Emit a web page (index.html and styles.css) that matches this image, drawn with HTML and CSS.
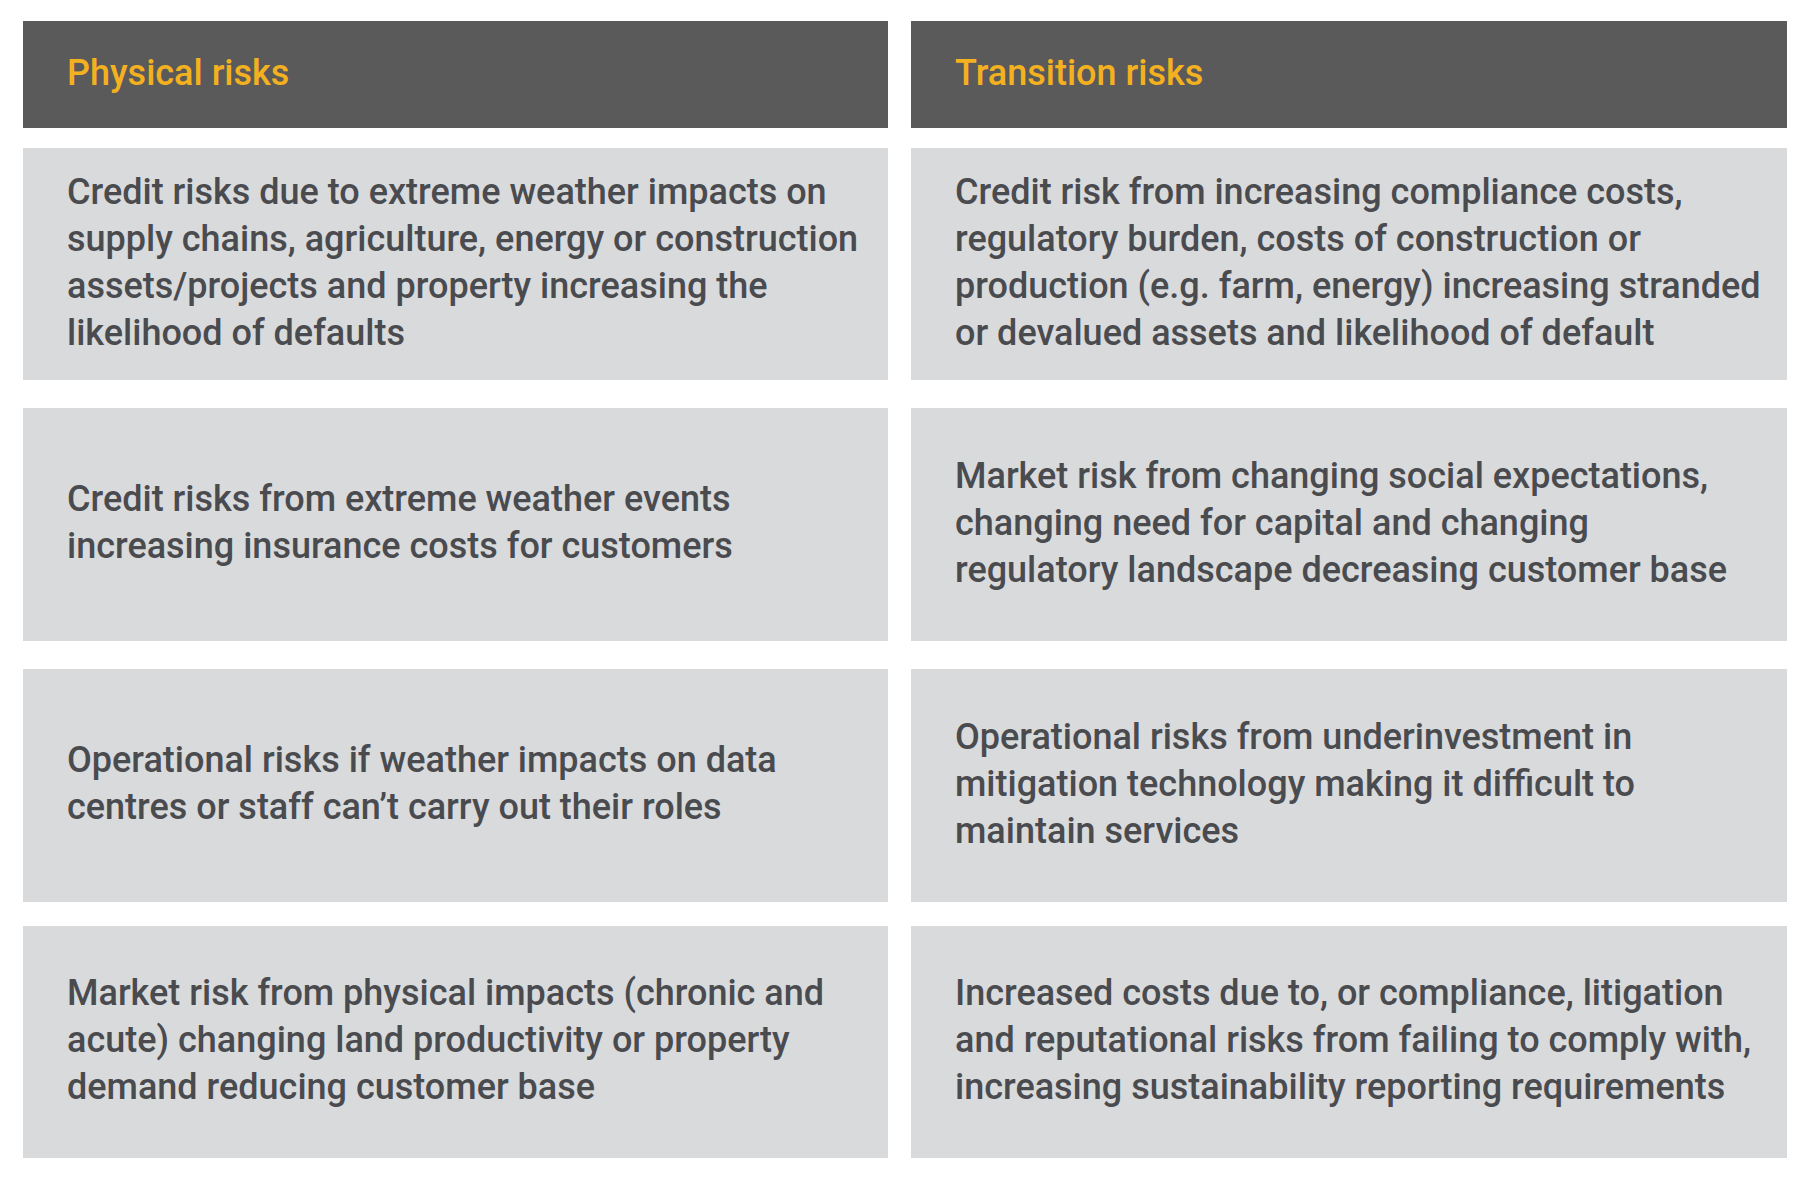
FILE: index.html
```html
<!DOCTYPE html>
<html lang="en">
<head>
<meta charset="utf-8">
<title>Physical and transition risks</title>
<link rel="stylesheet" href="styles.css">
</head>
<body>
<div class="table">
  <div class="head">Physical risks</div>
  <div class="head">Transition risks</div>

  <div class="cell r1">Credit risks due to extreme weather impacts on<br>supply chains, agriculture, energy or construction<br>assets/projects and property increasing the<br>likelihood of defaults</div>
  <div class="cell r1">Credit risk from increasing compliance costs,<br>regulatory burden, costs of construction or<br>production (e.g. farm, energy) increasing stranded<br>or devalued assets and likelihood of default</div>

  <div class="cell r2">Credit risks from extreme weather events<br>increasing insurance costs for customers</div>
  <div class="cell r2">Market risk from changing social expectations,<br>changing need for capital and changing<br>regulatory landscape decreasing customer base</div>

  <div class="cell r3">Operational risks if weather impacts on data<br>centres or staff can’t carry out their roles</div>
  <div class="cell r3">Operational risks from underinvestment in<br>mitigation technology making it difficult to<br>maintain services</div>

  <div class="cell r4">Market risk from physical impacts (chronic and<br>acute) changing land productivity or property<br>demand reducing customer base</div>
  <div class="cell r4">Increased costs due to, or compliance, litigation<br>and reputational risks from failing to comply with,<br>increasing sustainability reporting requirements</div>
</div>
</body>
</html>
```
FILE: styles.css
```css
html, body {
  margin: 0;
  padding: 0;
  background: #ffffff;
}
body {
  font-family: Roboto, "Liberation Sans", sans-serif;
}
.table {
  display: grid;
  grid-template-columns: 865px 876px;
  column-gap: 23px;
  padding: 21px 0 0 23px;
}
.head {
  height: 107px;
  background: #5a5a5a;
  color: #f4b11f;
  font-size: 36px;
  font-weight: 500;
  line-height: 47px;
  display: flex;
  align-items: center;
  padding-left: 44px;
  padding-bottom: 3px;
  box-sizing: border-box;
}
.cell {
  background: #d9dadc;
  color: #4a4b4f;
  font-size: 36px;
  font-weight: 500;
  line-height: 47px;
  display: flex;
  align-items: center;
  padding-left: 44px;
  padding-bottom: 3px;
  box-sizing: border-box;
  white-space: nowrap;
}
.r1 { height: 232px; margin-top: 20px; }
.r2 { height: 233px; margin-top: 28px; }
.r3 { height: 233px; margin-top: 28px; }
.r4 { height: 232px; margin-top: 24px; }
```
